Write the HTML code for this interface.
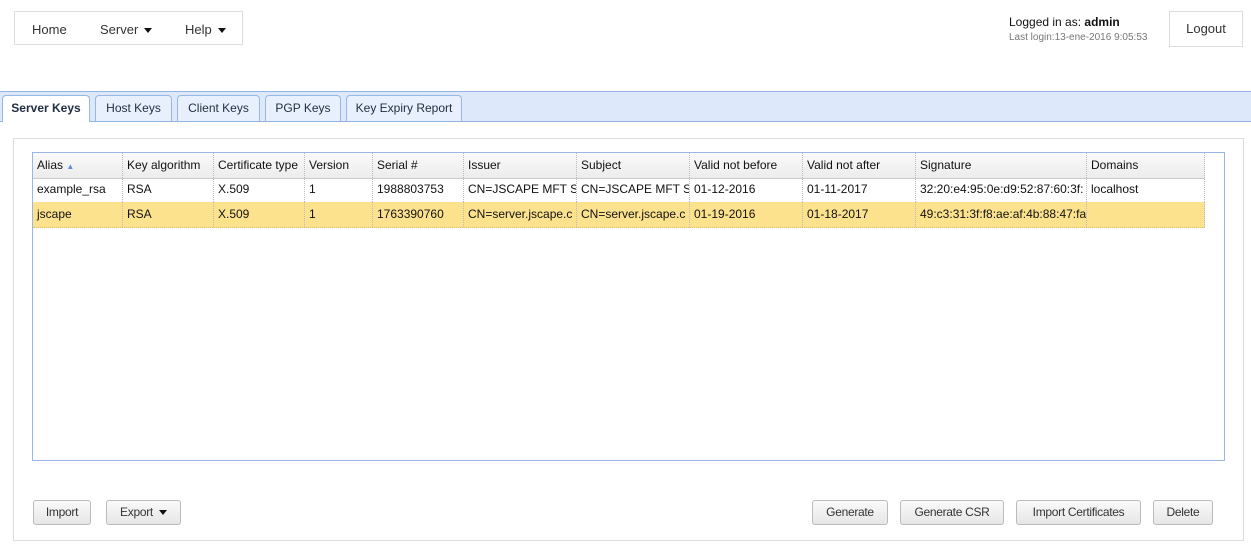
<!DOCTYPE html>
<html><head><style>
body{margin:0;width:1251px;height:549px;background:#fff;font-family:"Liberation Sans",Arial,sans-serif;font-size:12px;color:#222;position:relative;overflow:hidden}
.abs{position:absolute}
.nav{left:14px;top:11px;width:229px;height:34px;border:1px solid #ddd;box-sizing:border-box}
.nav span{position:absolute;top:10px;font-size:13px;color:#333}
.caret{display:inline-block;width:0;height:0;border-left:4px solid transparent;border-right:4px solid transparent;border-top:5px solid #111;vertical-align:middle;margin-left:6px}
.band{left:0;top:91px;width:1251px;height:29px;background:#dde9fb;border-top:1px solid #95b4e6;border-bottom:1px solid #95b4e6}
.tab{position:absolute;top:95px;height:26px;box-sizing:border-box;border:1px solid #99b7e6;border-bottom:none;border-radius:4px 4px 0 0;background:#e8f0fd;text-align:center;line-height:24px;font-size:12px;color:#1f2d40}
.tab.act{background:#fff;font-weight:bold;height:27px}
.panel{left:13px;top:138px;width:1231px;height:403px;border:1px solid #ddd;box-sizing:border-box}
.grid{left:32px;top:152px;width:1193px;height:309px;border:1px solid #99b7e6;box-sizing:border-box}
.row{position:absolute;left:33px;height:25px;width:1172px}
.c{position:absolute;top:0;height:25px;line-height:25px;padding-left:4px;box-sizing:border-box;border-right:1px dotted #bbb;overflow:hidden;white-space:nowrap;font-size:12px;color:#111}
.hdr{background:linear-gradient(#fafafa,#ececec);border-bottom:1px solid #ccc}
.sel{background:#fde28e;border-bottom:1px dotted #d8c070}
.btn{position:absolute;top:500px;height:25px;box-sizing:border-box;border:1px solid #bbb;border-radius:3px;background:linear-gradient(#fafafa,#e6e6e6);text-align:center;line-height:23px;font-size:12px;color:#333;letter-spacing:-0.3px}
</style></head><body>
<div class="abs nav"><span style="left:17px">Home</span><span style="left:85px">Server<i class="caret"></i></span><span style="left:170px">Help<i class="caret"></i></span></div>
<div class="abs" style="left:1009px;top:15px;font-size:12px;color:#111">Logged in as: <b>admin</b></div>
<div class="abs" style="left:1009px;top:32px;font-size:10px;color:#777">Last login:13-ene-2016 9:05:53</div>
<div class="abs" style="left:1169px;top:11px;width:74px;height:36px;border:1px solid #ddd;box-sizing:border-box;text-align:center;line-height:34px;font-size:13px;color:#333">Logout</div>
<div class="abs band"></div>
<div class="tab act" style="left:2px;width:88px">Server Keys</div>
<div class="tab" style="left:95px;width:77px">Host Keys</div>
<div class="tab" style="left:177px;width:83px">Client Keys</div>
<div class="tab" style="left:265px;width:76px">PGP Keys</div>
<div class="tab" style="left:346px;width:116px">Key Expiry Report</div>
<div class="abs panel"></div>
<div class="abs grid"></div>
<div class="row hdr" style="top:153px">
<div class="c" style="left:0;width:90px">Alias <span style="color:#5b8bd6;font-size:8px">&#9650;</span></div>
<div class="c" style="left:90px;width:91px">Key algorithm</div>
<div class="c" style="left:181px;width:91px">Certificate type</div>
<div class="c" style="left:272px;width:68px">Version</div>
<div class="c" style="left:340px;width:91px">Serial #</div>
<div class="c" style="left:431px;width:113px">Issuer</div>
<div class="c" style="left:544px;width:113px">Subject</div>
<div class="c" style="left:657px;width:113px">Valid not before</div>
<div class="c" style="left:770px;width:113px">Valid not after</div>
<div class="c" style="left:883px;width:171px">Signature</div>
<div class="c" style="left:1054px;width:118px">Domains</div>
</div>
<div class="row" style="top:177px;border-bottom:1px dotted #ccc">
<div class="c" style="left:0;width:90px">example_rsa</div>
<div class="c" style="left:90px;width:91px">RSA</div>
<div class="c" style="left:181px;width:91px">X.509</div>
<div class="c" style="left:272px;width:68px">1</div>
<div class="c" style="left:340px;width:91px">1988803753</div>
<div class="c" style="left:431px;width:113px">CN=JSCAPE MFT S</div>
<div class="c" style="left:544px;width:113px">CN=JSCAPE MFT S</div>
<div class="c" style="left:657px;width:113px">01-12-2016</div>
<div class="c" style="left:770px;width:113px">01-11-2017</div>
<div class="c" style="left:883px;width:171px">32:20:e4:95:0e:d9:52:87:60:3f:</div>
<div class="c" style="left:1054px;width:118px">localhost</div>
</div>
<div class="row sel" style="top:202px">
<div class="c" style="left:0;width:90px">jscape</div>
<div class="c" style="left:90px;width:91px">RSA</div>
<div class="c" style="left:181px;width:91px">X.509</div>
<div class="c" style="left:272px;width:68px">1</div>
<div class="c" style="left:340px;width:91px">1763390760</div>
<div class="c" style="left:431px;width:113px">CN=server.jscape.c</div>
<div class="c" style="left:544px;width:113px">CN=server.jscape.c</div>
<div class="c" style="left:657px;width:113px">01-19-2016</div>
<div class="c" style="left:770px;width:113px">01-18-2017</div>
<div class="c" style="left:883px;width:171px">49:c3:31:3f:f8:ae:af:4b:88:47:fa</div>
<div class="c" style="left:1054px;width:118px"></div>
</div>
<div class="btn" style="left:33px;width:58px">Import</div>
<div class="btn" style="left:106px;width:75px">Export<i class="caret"></i></div>
<div class="btn" style="left:812px;width:76px">Generate</div>
<div class="btn" style="left:900px;width:104px">Generate CSR</div>
<div class="btn" style="left:1016px;width:125px">Import Certificates</div>
<div class="btn" style="left:1153px;width:60px">Delete</div>
</body></html>
